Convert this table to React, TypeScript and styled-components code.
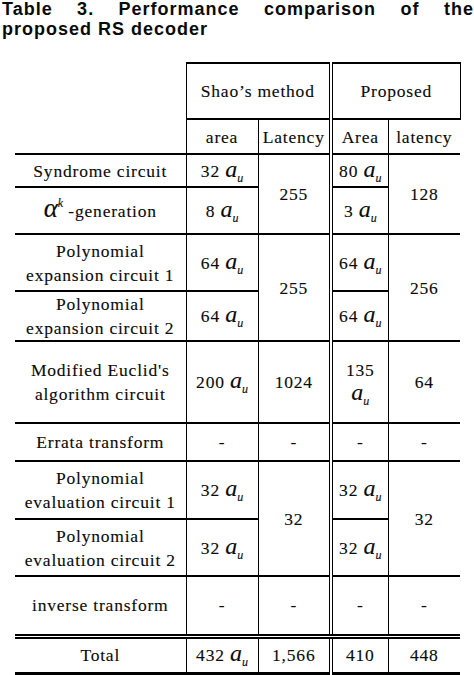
import React, { ReactElement, ReactNode } from 'react'
import styled, { createGlobalStyle } from 'styled-components'

const GlobalStyle = createGlobalStyle`
  html, body {
    margin: 0;
    padding: 0;
    background: #fff;
  }
`

const Page = styled.main`
  width: 474px;
  height: 675px;
  overflow: hidden;
  background: #fff;
  color: #0a0a0a;
`

const Caption = styled.h1`
  box-sizing: border-box;
  width: 474px;
  margin: -1px 0 0;
  padding: 0 0 0 2px;
  font-family: 'Liberation Sans', Arial, sans-serif;
  font-weight: bold;
  font-size: 18px;
  line-height: 20px;
  letter-spacing: 1px;
  text-align: justify;
`

const Grid = styled.table`
  margin: 23px 0 0 15px;
  width: 445px;
  border-collapse: collapse;
  table-layout: fixed;
  font-family: 'Liberation Serif', 'Times New Roman', serif;
  font-size: 17.5px;
  letter-spacing: 0.8px;
  line-height: 24px;
  color: #0a0a0a;
  -webkit-text-stroke: 0.12px #0a0a0a;
`

const Col = styled.col<{ $w: number }>`
  width: ${p => p.$w}px;
`

const Row = styled.tr<{ $h: number }>`
  height: ${p => p.$h}px;
`

type Edge = 'none' | 'line' | 'double' | 'heavy'

const vertical: Record<Edge, string> = {
  none: 'none',
  line: '1px solid #000',
  double: '4px double #000',
  heavy: '2px solid #000',
}

const horizontal: Record<Edge, string> = {
  none: 'none',
  line: '2px solid #000',
  double: '5px double #000',
  heavy: '3px solid #000',
}

const Cell = styled.td<{
  $left?: Edge
  $right?: Edge
  $top?: Edge
  $bottom?: Edge
  $tight?: boolean
}>`
  padding: ${p => (p.$tight ? '0' : '0 4px')};
  text-align: center;
  vertical-align: middle;
  white-space: nowrap;
  border-left: ${p => vertical[p.$left || 'line']};
  border-right: ${p => vertical[p.$right || 'none']};
  border-top: ${p => horizontal[p.$top || 'none']};
  border-bottom: ${p => horizontal[p.$bottom || 'line']};
`

const Symbol = styled.i`
  font-size: 24px;
  line-height: 0;
  letter-spacing: 0;
`

const Sub = styled.sub`
  font-size: 12px;
  font-style: italic;
  line-height: 0;
  letter-spacing: 0;
  vertical-align: -5px;
`

const Greek = styled.i`
  font-size: 27px;
  line-height: 0;
  letter-spacing: 0;
`

const Sup = styled.sup`
  font-size: 12px;
  font-style: italic;
  line-height: 0;
  letter-spacing: 0;
  vertical-align: 10px;
`

const Au = (): ReactElement => (
  <>
    <Symbol>a</Symbol>
    <Sub>u</Sub>
  </>
)

const area = (n: string): ReactNode => (
  <>
    {n} <Au />
  </>
)

type Group = {
  labels: ReactNode[]
  heights: number[]
  shaoArea: ReactNode[]
  shaoLatency: ReactNode
  propArea: ReactNode[]
  propLatency: ReactNode
  bottom?: Edge
}

const groups: Group[] = [
  {
    labels: [
      'Syndrome circuit',
      <>
        <Greek>α</Greek>
        <Sup>k</Sup> -generation
      </>,
    ],
    heights: [33, 47],
    shaoArea: [area('32'), area('8')],
    shaoLatency: '255',
    propArea: [area('80'), area('3')],
    propLatency: '128',
  },
  {
    labels: [
      <>
        Polynomial
        <br />
        expansion circuit 1
      </>,
      <>
        Polynomial
        <br />
        expansion circuit 2
      </>,
    ],
    heights: [57, 49],
    shaoArea: [area('64'), area('64')],
    shaoLatency: '255',
    propArea: [area('64'), area('64')],
    propLatency: '256',
  },
  {
    labels: [
      <>
        Modified Euclid's
        <br />
        algorithm circuit
      </>,
    ],
    heights: [82],
    shaoArea: [area('200')],
    shaoLatency: '1024',
    propArea: [
      <>
        135
        <br />
        <Au />
      </>,
    ],
    propLatency: '64',
  },
  {
    labels: ['Errata transform'],
    heights: [38],
    shaoArea: ['-'],
    shaoLatency: '-',
    propArea: ['-'],
    propLatency: '-',
  },
  {
    labels: [
      <>
        Polynomial
        <br />
        evaluation circuit 1
      </>,
      <>
        Polynomial
        <br />
        evaluation circuit 2
      </>,
    ],
    heights: [58, 57],
    shaoArea: [area('32'), area('32')],
    shaoLatency: '32',
    propArea: [area('32'), area('32')],
    propLatency: '32',
  },
  {
    labels: ['inverse transform'],
    heights: [60],
    shaoArea: ['-'],
    shaoLatency: '-',
    propArea: ['-'],
    propLatency: '-',
    bottom: 'double',
  },
  {
    labels: ['Total'],
    heights: [37],
    shaoArea: [area('432')],
    shaoLatency: '1,566',
    propArea: ['410'],
    propLatency: '448',
    bottom: 'heavy',
  },
]

const GroupRows = ({ group }: { group: Group }): ReactElement => {
  const span = group.labels.length
  const edge = group.bottom || 'line'
  return (
    <>
      {group.labels.map((label, i) => {
        const bottom = i === span - 1 ? edge : 'line'
        return (
          <Row key={i} $h={group.heights[i]}>
            <Cell $left='none' $bottom={bottom}>
              {label}
            </Cell>
            <Cell $bottom={bottom}>{group.shaoArea[i]}</Cell>
            {i === 0 && (
              <Cell rowSpan={span} $bottom={edge}>
                {group.shaoLatency}
              </Cell>
            )}
            <Cell $left='double' $bottom={bottom} $tight>
              {group.propArea[i]}
            </Cell>
            {i === 0 && (
              <Cell rowSpan={span} $bottom={edge}>
                {group.propLatency}
              </Cell>
            )}
          </Row>
        )
      })}
    </>
  )
}

const App = (): ReactElement => (
  <Page>
    <GlobalStyle />
    <Caption>Table 3. Performance comparison of the proposed RS decoder</Caption>
    <Grid>
      <colgroup>
        <Col $w={171} />
        <Col $w={72} />
        <Col $w={73} />
        <Col $w={57} />
        <Col $w={72} />
      </colgroup>
      <tbody>
        <Row $h={56}>
          <Cell rowSpan={2} $left='none' />
          <Cell colSpan={2} $top='line'>
            Shao’s method
          </Cell>
          <Cell colSpan={2} $top='line' $left='double' $right='line'>
            Proposed
          </Cell>
        </Row>
        <Row $h={35}>
          <Cell>area</Cell>
          <Cell>Latency</Cell>
          <Cell $left='double' $tight>
            Area
          </Cell>
          <Cell>latency</Cell>
        </Row>
        {groups.map((group, i) => (
          <GroupRows key={i} group={group} />
        ))}
      </tbody>
    </Grid>
  </Page>
)

export default App
